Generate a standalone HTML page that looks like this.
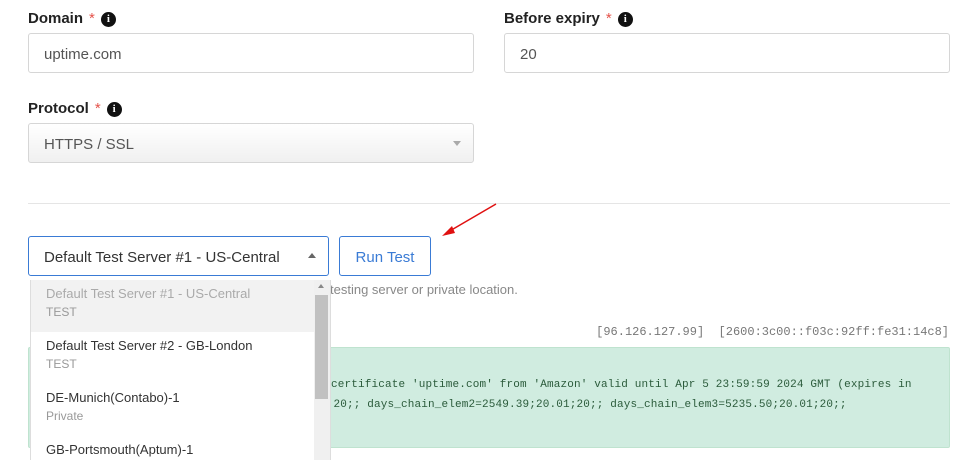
<!DOCTYPE html><html><head><style>
html{overflow:hidden;height:460px}
body{margin:0;width:958px;height:460px;overflow:hidden;background:#fff;font-family:"Liberation Sans",sans-serif;position:relative;color:#222}
.a{position:absolute}
.lbl{font-size:15px;font-weight:bold;color:#222}
.lbl .s{color:#e5534b;font-weight:normal;margin:0 6px}
.i{display:inline-block;width:15px;height:15px;border-radius:50%;background:#111;color:#fff;font-size:11px;line-height:15px;text-align:center;font-weight:bold;font-family:"Liberation Serif",serif;vertical-align:1px}
.inp{border:1px solid #d6d6d6;border-radius:3px;box-sizing:border-box;height:40px;font-size:15px;color:#555;padding:0 15px;line-height:42px}
.mono{font-family:"Liberation Mono",monospace;font-size:11px;letter-spacing:0.15px;color:#2a5a3a}
.it{position:absolute;left:0;width:283px;height:52px;padding-left:15px;box-sizing:border-box;font-size:13px;color:#333}
.it div{margin-top:6px}
.it span{display:block;color:#999;font-size:12px;margin-top:4px}
</style></head><body>
<div class="a lbl" style="left:28px;top:10px">Domain<span class="s">*</span><span class="i">i</span></div>
<div class="a inp" style="left:28px;top:33px;width:446px">uptime.com</div>
<div class="a lbl" style="left:504px;top:10px">Before expiry<span class="s">*</span><span class="i">i</span></div>
<div class="a inp" style="left:504px;top:33px;width:446px">20</div>
<div class="a lbl" style="left:28px;top:100px">Protocol<span class="s">*</span><span class="i">i</span></div>
<div class="a inp" style="left:28px;top:123px;width:446px;background:linear-gradient(#fff,#f0f0f0)">HTTPS / SSL<span style="position:absolute;right:12px;top:17px;border:4px solid transparent;border-top:5px solid #aaa;border-bottom:0"></span></div>
<div class="a" style="left:28px;top:203px;width:922px;height:1px;background:#e5e5e5"></div>
<div class="a inp" style="left:28px;top:236px;width:301px;border-color:#3a7bd5;color:#333">Default Test Server #1 - US-Central<span style="position:absolute;right:12px;top:16px;border:4px solid transparent;border-bottom:5px solid #666;border-top:0"></span></div>
<div class="a inp" style="left:339px;top:236px;width:92px;border-color:#3a7bd5;color:#3a7bd5;padding:0;text-align:center">Run Test</div>
<svg class="a" style="left:438px;top:200px" width="62" height="40"><line x1="58" y1="4" x2="10" y2="32" stroke="#e01010" stroke-width="1.5"/><polygon points="4,36 14,26 17,33" fill="#e01010"/></svg>
<div class="a" style="left:330px;top:282px;font-size:13px;color:#888">testing server or private location.</div>
<div class="a" style="right:9px;top:325px;font-family:'Liberation Mono',monospace;font-size:12px;color:#777">[96.126.127.99]&nbsp; [2600:3c00::f03c:92ff:fe31:14c8]</div>
<div class="a" style="left:28px;top:347px;width:920px;height:99px;background:#d0ece0;border:1px solid #bfe3cf;border-radius:2px"></div>
<div class="a mono" style="left:331px;top:379px">certificate 'uptime.com' from 'Amazon' valid until Apr 5 23:59:59 2024 GMT (expires in</div>
<div class="a mono" style="left:320px;top:399px">.;20;; days_chain_elem2=2549.39;20.01;20;; days_chain_elem3=5235.50;20.01;20;;</div>
<div class="a" style="left:30px;top:280px;width:299px;height:180px;background:#fff;border-left:1px solid #ddd;border-right:1px solid #ddd;overflow:hidden">
<div class="it" style="top:0;background:#f2f2f2;color:#aaa"><div>Default Test Server #1 - US-Central</div><span style="margin-top:4px">TEST</span></div>
<div class="it" style="top:52px"><div>Default Test Server #2 - GB-London</div><span>TEST</span></div>
<div class="it" style="top:104px"><div>DE-Munich(Contabo)-1</div><span>Private</span></div>
<div class="it" style="top:156px"><div>GB-Portsmouth(Aptum)-1</div></div>
<div class="a" style="left:283px;top:0;width:16px;height:180px;background:#f0f0f0"></div>
<div class="a" style="left:284px;top:15px;width:13px;height:104px;background:#c1c1c1"></div>
<div class="a" style="left:287px;top:4px;border:3px solid transparent;border-bottom:4px solid #888;border-top:0"></div>
</div>
</body></html>
